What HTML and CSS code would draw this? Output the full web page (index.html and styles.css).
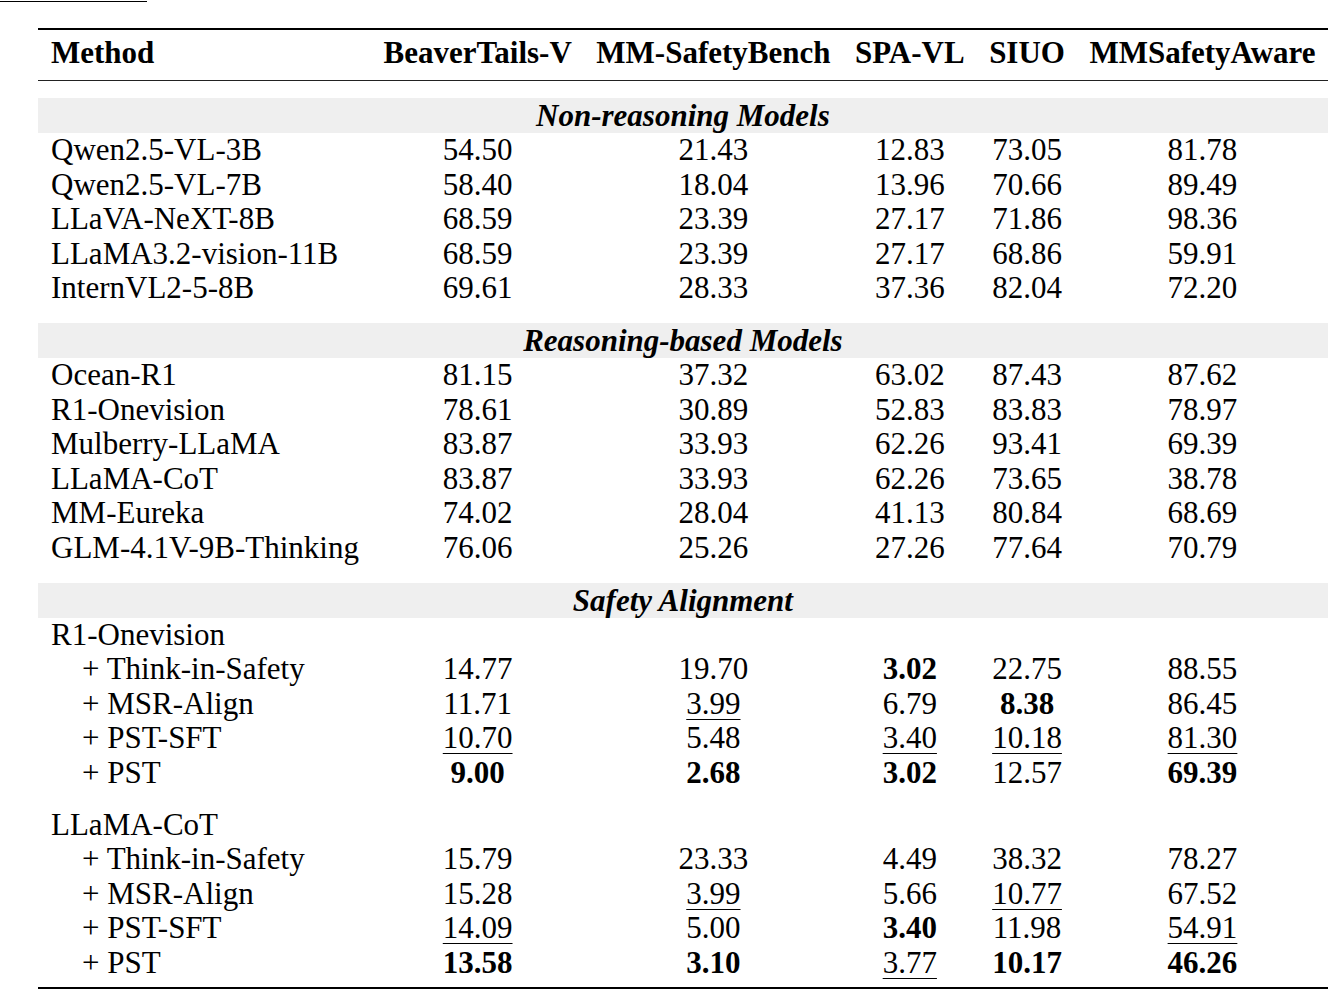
FILE: index.html
```html
<!DOCTYPE html>
<html lang="en">
<head>
  <meta charset="UTF-8" />
  <meta name="viewport" content="width=device-width, initial-scale=1.0"/>
  <title>Safety Benchmark Results</title>
  <link rel="stylesheet" href="styles.css">
</head>
<body>
  <div class="short-rule"></div>

  <table class="results">
    <thead>
      <tr>
        <th class="method">Method</th>
        <th>BeaverTails-V</th>
        <th>MM-SafetyBench</th>
        <th>SPA-VL</th>
        <th>SIUO</th>
        <th>MMSafetyAware</th>
      </tr>
    </thead>
    <tbody>
      <tr class="gap head-gap"><td colspan="6"></td></tr>
      <tr class="section"><td colspan="6">Non-reasoning Models</td></tr>
      <tr><td class="method">Qwen2.5-VL-3B</td><td>54.50</td><td>21.43</td><td>12.83</td><td>73.05</td><td>81.78</td></tr>
      <tr><td class="method">Qwen2.5-VL-7B</td><td>58.40</td><td>18.04</td><td>13.96</td><td>70.66</td><td>89.49</td></tr>
      <tr><td class="method">LLaVA-NeXT-8B</td><td>68.59</td><td>23.39</td><td>27.17</td><td>71.86</td><td>98.36</td></tr>
      <tr><td class="method">LLaMA3.2-vision-11B</td><td>68.59</td><td>23.39</td><td>27.17</td><td>68.86</td><td>59.91</td></tr>
      <tr><td class="method">InternVL2-5-8B</td><td>69.61</td><td>28.33</td><td>37.36</td><td>82.04</td><td>72.20</td></tr>

      <tr class="gap"><td colspan="6"></td></tr>
      <tr class="section"><td colspan="6">Reasoning-based Models</td></tr>
      <tr><td class="method">Ocean-R1</td><td>81.15</td><td>37.32</td><td>63.02</td><td>87.43</td><td>87.62</td></tr>
      <tr><td class="method">R1-Onevision</td><td>78.61</td><td>30.89</td><td>52.83</td><td>83.83</td><td>78.97</td></tr>
      <tr><td class="method">Mulberry-LLaMA</td><td>83.87</td><td>33.93</td><td>62.26</td><td>93.41</td><td>69.39</td></tr>
      <tr><td class="method">LLaMA-CoT</td><td>83.87</td><td>33.93</td><td>62.26</td><td>73.65</td><td>38.78</td></tr>
      <tr><td class="method">MM-Eureka</td><td>74.02</td><td>28.04</td><td>41.13</td><td>80.84</td><td>68.69</td></tr>
      <tr><td class="method">GLM-4.1V-9B-Thinking</td><td>76.06</td><td>25.26</td><td>27.26</td><td>77.64</td><td>70.79</td></tr>

      <tr class="gap"><td colspan="6"></td></tr>
      <tr class="section"><td colspan="6">Safety Alignment</td></tr>
      <tr><td class="method">R1-Onevision</td><td></td><td></td><td></td><td></td><td></td></tr>
      <tr><td class="method sub">+ Think-in-Safety</td><td>14.77</td><td>19.70</td><td class="best">3.02</td><td>22.75</td><td>88.55</td></tr>
      <tr><td class="method sub">+ MSR-Align</td><td>11.71</td><td><span class="second">3.99</span></td><td>6.79</td><td class="best">8.38</td><td>86.45</td></tr>
      <tr><td class="method sub">+ PST-SFT</td><td><span class="second">10.70</span></td><td>5.48</td><td><span class="second">3.40</span></td><td><span class="second">10.18</span></td><td><span class="second">81.30</span></td></tr>
      <tr><td class="method sub">+ PST</td><td class="best">9.00</td><td class="best">2.68</td><td class="best">3.02</td><td>12.57</td><td class="best">69.39</td></tr>

      <tr class="gap"><td colspan="6"></td></tr>
      <tr><td class="method">LLaMA-CoT</td><td></td><td></td><td></td><td></td><td></td></tr>
      <tr><td class="method sub">+ Think-in-Safety</td><td>15.79</td><td>23.33</td><td>4.49</td><td>38.32</td><td>78.27</td></tr>
      <tr><td class="method sub">+ MSR-Align</td><td>15.28</td><td><span class="second">3.99</span></td><td>5.66</td><td><span class="second">10.77</span></td><td>67.52</td></tr>
      <tr><td class="method sub">+ PST-SFT</td><td><span class="second">14.09</span></td><td>5.00</td><td class="best">3.40</td><td>11.98</td><td><span class="second">54.91</span></td></tr>
      <tr><td class="method sub">+ PST</td><td class="best">13.58</td><td class="best">3.10</td><td><span class="second">3.77</span></td><td class="best">10.17</td><td class="best">46.26</td></tr>
      <tr class="gap end-gap"><td colspan="6"></td></tr>
    </tbody>
  </table>
</body>
</html>
```

FILE: styles.css
```css
:root {
  --ink: #000;
  --band: #efefef;
}

body {
  margin: 0;
  background: white;
  color: var(--ink);
  font-family: "Liberation Serif", "Times New Roman", serif;
}

.short-rule {
  width: 147px;
  height: 1px;
  margin-top: 1px;
  background: var(--ink);
}

.results {
  margin: 26px 0 0 38px;
  border-collapse: separate;
  border-spacing: 0;
  border-top: 2px solid var(--ink);
  border-bottom: 2px solid var(--ink);
  font-size: 31px;
  line-height: 34.5px;
  white-space: nowrap;
}

.results th,
.results td {
  padding: 0 12.25px;
  text-align: center;
  vertical-align: top;
}

.results th {
  font-weight: bold;
  padding-top: 6px;
  padding-bottom: 9.5px;
  border-bottom: 1.5px solid #222;
}

.results .method {
  text-align: left;
  padding-left: 13px;
}

.results .sub {
  padding-left: 44px;
}

.gap td {
  height: 17.5px;
  padding: 0;
  line-height: 0;
}

.head-gap td {
  height: 17px;
}

.end-gap td {
  height: 7px;
}

.section td {
  background: var(--band);
  font-weight: bold;
  font-style: italic;
  line-height: 35px;
}

.best {
  font-weight: bold;
}

.second {
  text-decoration: underline;
  text-decoration-thickness: 1px;
  text-underline-offset: 5px;
}
```
